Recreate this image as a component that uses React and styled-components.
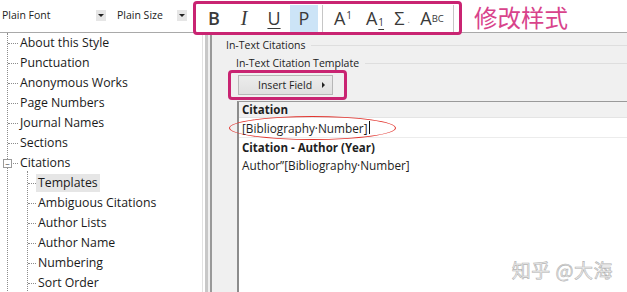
import React from "react"
import styled, { createGlobalStyle } from "styled-components"

const GlobalStyle = createGlobalStyle`
    html, body {
        margin: 0;
        padding: 0;
        background: #ffffff;
        overflow: hidden;
    }
    body {
        font-family: "Open Sans", "Noto Sans", sans-serif;
        color: #1e1e1e;
    }
`

const PINK = "#c92472"

// Tree data:
const topItems = [
    "About this Style",
    "Punctuation",
    "Anonymous Works",
    "Page Numbers",
    "Journal Names",
    "Sections",
]

const citationChildren = [
    "Templates",
    "Ambiguous Citations",
    "Author Lists",
    "Author Name",
    "Numbering",
    "Sort Order",
]

const App = () => {
    return (
        <>
            <GlobalStyle />
            <Window>
                <Toolbar>
                    <Picker $w={94}>Plain Font</Picker>
                    <DropArrow />
                    <Picker $w={60} $ml={11}>Plain Size</Picker>
                    <DropArrow />
                    <FormatGroup>
                        <FmtButton $bold>B</FmtButton>
                        <FmtButton $italic>I</FmtButton>
                        <FmtButton $underline>U</FmtButton>
                        <FmtButton $active>P</FmtButton>
                        <Separator />
                        <FmtButton $w={32}>A<Sup>1</Sup></FmtButton>
                        <FmtButton>A<Sub>1</Sub></FmtButton>
                        <FmtButton $w={22}>Σ<Dot>.</Dot></FmtButton>
                        <FmtButton $w={34}>A<SmallCaps>BC</SmallCaps></FmtButton>
                        <Separator />
                    </FormatGroup>
                    <Title>修改样式</Title>
                </Toolbar>

                <Body>
                    <TreePanel>
                        <Tree>
                            {topItems.map((item) => (
                                <li key={item}>
                                    <TreeRow $indent={8}>
                                        <Stub $w={10} />
                                        <Label>{item}</Label>
                                    </TreeRow>
                                </li>
                            ))}
                            <li>
                                <TreeRow $indent={8}>
                                    <Toggle>−</Toggle>
                                    <Stub $w={10} />
                                    <Label>Citations</Label>
                                </TreeRow>
                                <SubTree>
                                    {citationChildren.map((item, i) => (
                                        <li key={item}>
                                            <TreeRow $indent={28}>
                                                <Stub $w={8} />
                                                <Label $selected={i === 0}>{item}</Label>
                                            </TreeRow>
                                        </li>
                                    ))}
                                </SubTree>
                            </li>
                        </Tree>
                    </TreePanel>

                    <Splitter />

                    <RightPanel>
                        <GroupHeader $indent={14}>
                            <span>In-Text Citations</span>
                            <GroupLine />
                        </GroupHeader>
                        <GroupHeader $indent={24}>
                            <span>In-Text Citation Template</span>
                            <GroupLine />
                        </GroupHeader>

                        <HighlightBox>
                            <InsertButton>
                                Insert Field
                                <Caret />
                            </InsertButton>
                        </HighlightBox>

                        <Editor>
                            <FieldHeader>Citation</FieldHeader>
                            <FieldValue>
                                [Bibliography·Number]<Cursor />
                            </FieldValue>
                            <FieldHeader $plain>Citation - Author (Year)</FieldHeader>
                            <FieldValue $plain>Author”[Bibliography·Number]</FieldValue>
                        </Editor>

                        <RedEllipse />
                        <Watermark>知乎 @大海</Watermark>
                    </RightPanel>
                </Body>
            </Window>
        </>
    )
}

const Window = styled.div`
    width: 627px;
    height: 292px;
    display: flex;
    flex-direction: column;
    overflow: hidden;
`

// Top toolbar:
const Toolbar = styled.div`
    height: 32px;
    flex-shrink: 0;
    display: flex;
    align-items: flex-start;
    border-bottom: 1px solid #a9a9a9;
    background: #ffffff;
`

const Picker = styled.span`
    width: ${(p) => p.$w}px;
    margin-left: ${(p) => p.$ml || 2}px;
    margin-top: 6px;
    font-size: 10.5px;
    line-height: 18px;
    color: #222;
`

const DropArrow = styled.span`
    width: 10px;
    height: 11px;
    margin-top: 10px;
    background: #e6e6e6;
    display: flex;
    align-items: center;
    justify-content: center;

    &::after {
        content: "";
        border-left: 3px solid transparent;
        border-right: 3px solid transparent;
        border-top: 3px solid #222;
    }
`

const FormatGroup = styled.div`
    position: relative;
    z-index: 2;
    margin-left: 6px;
    margin-top: 1px;
    height: 28px;
    padding: 0 3px 0 4px;
    border: 3px solid ${PINK};
    border-radius: 4px;
    background: #ffffff;
    display: flex;
    align-items: center;
    gap: 2px;
`

const FmtButton = styled.span`
    width: ${(p) => p.$w || 28}px;
    height: 27px;
    display: flex;
    align-items: center;
    justify-content: center;
    background: ${(p) => (p.$active ? "#cce4f7" : "transparent")};
    font-family: ${(p) => (p.$italic ? '"Liberation Serif", serif' : '"Open Sans", sans-serif')};
    font-style: ${(p) => (p.$italic ? "italic" : "normal")};
    font-weight: ${(p) => (p.$bold ? 600 : 400)};
    text-decoration: ${(p) => (p.$underline ? "underline" : "none")};
    text-underline-offset: 3px;
    font-size: ${(p) => (p.$italic ? 20 : 18)}px;
    color: #3a3a3a;
`

const Sup = styled.span`
    font-size: 10px;
    align-self: flex-start;
    margin-top: 3px;
    margin-left: 1px;
`

const Sub = styled.span`
    font-size: 10px;
    align-self: flex-end;
    margin-bottom: 3px;
    margin-left: 1px;
    text-decoration: underline;
`

const Dot = styled.span`
    font-size: 9px;
    align-self: flex-end;
    margin-bottom: 6px;
    margin-left: 3px;
    color: #888;
`

const SmallCaps = styled.span`
    font-size: 9.5px;
    align-self: flex-end;
    margin-bottom: 7px;
`

const Separator = styled.span`
    width: 1px;
    height: 27px;
    background: #c6c6c6;
    margin: 0 2px;
`

const Title = styled.span`
    margin-left: 12px;
    font-family: "Noto Sans CJK SC", sans-serif;
    font-size: 23.5px;
    line-height: 34px;
    color: #d8438b;
    white-space: nowrap;
`

// Main body:
const Body = styled.div`
    flex: 1;
    display: flex;
    min-height: 0;
`

const TreePanel = styled.div`
    width: 202px;
    flex-shrink: 0;
    background: #ffffff;
    border-right: 1px solid #e2e2e2;
    overflow: hidden;
`

const Tree = styled.ul`
    position: relative;
    list-style: none;
    margin: 0;
    padding: 0;

    &::before {
        content: "";
        position: absolute;
        left: 7px;
        top: 0;
        bottom: -40px;
        border-left: 1px dotted #8c8c8c;
    }
`

const SubTree = styled.ul`
    position: relative;
    list-style: none;
    margin: 0;
    padding: 0;

    &::before {
        content: "";
        position: absolute;
        left: 27px;
        top: -2px;
        bottom: -40px;
        border-left: 1px dotted #8c8c8c;
    }
`

const TreeRow = styled.div`
    position: relative;
    height: 20px;
    display: flex;
    align-items: center;
    padding-left: ${(p) => p.$indent}px;
`

const Stub = styled.span`
    width: ${(p) => p.$w}px;
    border-top: 1px dotted #8c8c8c;
`

const Toggle = styled.span`
    position: absolute;
    left: 3px;
    top: 6px;
    width: 7px;
    height: 7px;
    border: 1px solid #9a9a9a;
    background: #fff;
    font-size: 8px;
    line-height: 7px;
    text-align: center;
    color: #333;
    z-index: 1;
`

const Label = styled.span`
    padding: 1px 2px;
    font-size: 12.3px;
    line-height: 16px;
    color: #1a1a1a;
    background: ${(p) => (p.$selected ? "#e6e6e6" : "transparent")};
    white-space: nowrap;
`

const Splitter = styled.div`
    width: 7px;
    flex-shrink: 0;
    background: linear-gradient(
        to right,
        #ffffff 0 2px,
        #c8c8c8 2px 5px,
        #efefef 5px 7px
    );
`

// Right panel:
const RightPanel = styled.div`
    position: relative;
    flex: 1;
    display: flex;
    flex-direction: column;
    padding-top: 3px;
    background: #f0f0f0;
    border-left: 2px solid #999999;
`

const GroupHeader = styled.div`
    height: 18px;
    display: flex;
    align-items: center;
    gap: 6px;
    padding-left: ${(p) => p.$indent}px;
    font-size: 10.5px;
    color: #222;
    white-space: nowrap;
`

const GroupLine = styled.span`
    flex: 1;
    height: 1px;
    background: #dedede;
`

const HighlightBox = styled.div`
    align-self: flex-start;
    margin-left: 16px;
    margin-top: -2px;
    padding: 2px 11px 2px 7px;
    border: 3px solid ${PINK};
    border-radius: 4px;
    display: flex;
`

const InsertButton = styled.div`
    width: 95px;
    height: 20px;
    box-sizing: border-box;
    display: flex;
    align-items: center;
    padding: 0 7px 0 19px;
    background: linear-gradient(#ececec, #e0e0e0);
    border: 1px solid #b7b7b7;
    font-size: 10.5px;
    color: #1e1e1e;
`

const Caret = styled.span`
    margin-left: auto;
    border-top: 3px solid transparent;
    border-bottom: 3px solid transparent;
    border-left: 3px solid #222;
`

const Editor = styled.div`
    flex: 1;
    margin-top: 1px;
    margin-left: 25px;
    background: #ffffff;
    border-left: 2px solid #8c8c8c;
    border-top: 1px solid #9a9a9a;
`

const FieldHeader = styled.div`
    height: ${(p) => (p.$plain ? 19 : 15)}px;
    display: flex;
    align-items: center;
    padding-left: 3px;
    font-size: 11.5px;
    font-weight: 700;
    color: #1e1e1e;
    background: ${(p) => (p.$plain ? "#ffffff" : "#f1f1f1")};
`

const FieldValue = styled.div`
    height: ${(p) => (p.$plain ? 16 : 19)}px;
    display: flex;
    align-items: center;
    padding-left: 3px;
    font-size: 11.8px;
    color: #1e1e1e;
    border-top: ${(p) => (p.$plain ? "none" : "1px solid #e4e4e4")};
    border-bottom: ${(p) => (p.$plain ? "none" : "1px solid #ececec")};
`

const Cursor = styled.span`
    width: 1px;
    height: 13px;
    margin-left: 1px;
    background: #111;
`

const RedEllipse = styled.div`
    position: absolute;
    left: 17px;
    top: 83px;
    width: 165px;
    height: 22px;
    border: 1.5px solid #e2352f;
    border-radius: 50%;
    pointer-events: none;
`

const Watermark = styled.div`
    position: absolute;
    right: 14px;
    bottom: 9px;
    font-family: "Noto Sans CJK SC", sans-serif;
    font-size: 19px;
    color: #eeeeee;
    -webkit-text-stroke: 0.6px #b4b4b4;
    letter-spacing: 0.5px;
`

export default App
